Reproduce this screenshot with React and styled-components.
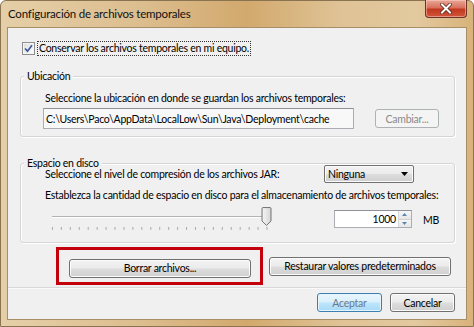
import React from 'react';
import styled, { createGlobalStyle, css } from 'styled-components';

const GlobalStyle = createGlobalStyle`
  html, body {
    margin: 0;
    padding: 0;
    width: 474px;
    height: 327px;
    overflow: hidden;
    background: #ffffff;
  }
  body {
    font-family: Lato, "Liberation Sans", sans-serif;
    font-size: 10.5px;
    letter-spacing: -0.25px;
    color: #000;
  }
  * { box-sizing: border-box; }
`;

const Window = styled.div`
  width: 474px;
  height: 327px;
  display: flex;
  flex-direction: column;
  border: 1px solid #8a7350;
  border-radius: 6px 6px 0 0;
  background: linear-gradient(90deg, #e5cfa8 0%, #dcbd8e 30%, #d2a96d 52%, #dfc396 72%, #e3c99f 88%, #d8b27a 100%);
`;

const TitleBar = styled.div`
  height: 26px;
  display: flex;
  align-items: center;
  padding-left: 7px;
`;

const Title = styled.span`
  font-size: 11.5px;
  letter-spacing: -0.2px;
  color: #111;
  margin-top: -1px;
`;

const CloseButton = styled.div`
  margin-left: auto;
  margin-right: 6px;
  align-self: flex-start;
  margin-top: -1px;
  width: 42px;
  height: 18px;
  border: 1px solid #6b3426;
  border-top: none;
  border-radius: 0 0 4px 4px;
  background: linear-gradient(180deg, #e9a898 0%, #d9705d 45%, #c2381f 55%, #d0563c 100%);
  box-shadow: inset 0 0 0 1px rgba(255, 210, 200, 0.5);
  display: flex;
  align-items: center;
  justify-content: center;
`;

const Client = styled.div`
  flex: 1;
  margin: 0 6px 6px;
  background: #f0f0f0;
  border: 1px solid #a88e66;
  display: flex;
  flex-direction: column;
`;

const CheckRow = styled.label`
  display: flex;
  align-items: center;
  gap: 2px;
  margin: 13px 0 0 14px;
  height: 15px;
`;

const CheckBox = styled.span`
  width: 13px;
  height: 13px;
  border: 1px solid #8e8f8f;
  background: linear-gradient(135deg, #dcdcdc 0%, #ffffff 100%);
  box-shadow: inset 0 0 0 1px #f4f4f4;
  display: flex;
  align-items: center;
  justify-content: center;
`;

const FocusText = styled.span`
  border: 1px dotted #333;
  padding: 0 1px;
  line-height: 13px;
`;

const Group = styled.div`
  position: relative;
  margin: ${(p) => p.$top}px 11px 0 12px;
  padding: ${(p) => p.$pad};
  border: 1px solid #d5d5d5;
  border-radius: 3px;
  box-shadow: inset 1px 1px 0 #ffffff, 1px 1px 0 #ffffff;
  display: flex;
  flex-direction: column;
`;

const Legend = styled.span`
  position: absolute;
  top: -7px;
  left: 3px;
  padding: 0 3px;
  background: #f0f0f0;
  line-height: 12px;
`;

const Text = styled.div`
  line-height: 12px;
  height: 12px;
  margin-left: ${(p) => p.$indent || 0}px;
  margin-top: ${(p) => p.$mt || 0}px;
  white-space: nowrap;
`;

const Row = styled.div`
  display: flex;
  align-items: ${(p) => p.$align || 'center'};
  height: ${(p) => p.$h}px;
  margin-top: ${(p) => p.$mt || 0}px;
`;

const TextField = styled.div`
  width: ${(p) => p.$w}px;
  height: ${(p) => p.$h}px;
  border: 1px solid #abadb3;
  border-top-color: #8e9196;
  background: ${(p) => p.$bg || '#fff'};
  display: flex;
  align-items: center;
  padding: 0 2px;
  white-space: nowrap;
  overflow: hidden;
`;

const buttonBase = css`
  height: 19px;
  border-radius: 3px;
  display: flex;
  align-items: center;
  justify-content: center;
  white-space: nowrap;
`;

const Button = styled.div`
  ${buttonBase};
  width: ${(p) => p.$w}px;
  margin-left: ${(p) => p.$ml || 0}px;
  border: 1px solid #707070;
  background: linear-gradient(180deg, #f3f3f3 0%, #ebebeb 48%, #dddddd 52%, #cfcfcf 100%);
  box-shadow: inset 0 0 0 1px #fcfcfc;
  color: #000;
  ${(p) =>
    p.$variant === 'disabled' &&
    css`
      border-color: #adb2b5;
      background: #f4f4f4;
      box-shadow: none;
      color: #8a8a8a;
    `}
  ${(p) =>
    p.$variant === 'primary' &&
    css`
      border-color: #3c7fb1;
      background: linear-gradient(180deg, #eaf6fd 0%, #d9f0fc 48%, #bee6fd 52%, #a7d9f5 100%);
      box-shadow: inset 0 0 0 1px #e8f4fb;
      color: #6a7987;
    `}
`;

const Combo = styled.div`
  width: 90px;
  height: 18px;
  margin-left: auto;
  margin-right: 25px;
  border: 1px solid #707070;
  border-radius: 2px;
  background: linear-gradient(180deg, #f2f2f2 0%, #ebebeb 48%, #dddddd 52%, #cfcfcf 100%);
  box-shadow: inset 0 0 0 1px #fbfbfb;
  display: flex;
  align-items: center;
  padding: 0 5px 0 3px;
  justify-content: space-between;
`;

const Spin = styled.div`
  display: flex;
  width: 78px;
  height: 18px;
  margin-left: 61px;
  margin-top: 5px;
  border: 1px solid #abadb3;
  border-top-color: #8e9196;
  background: #fff;
`;

const SpinValue = styled.div`
  flex: 1;
  display: flex;
  align-items: center;
  justify-content: flex-end;
  padding-right: 2px;
`;

const SpinArrows = styled.div`
  width: 13px;
  display: flex;
  flex-direction: column;
  border-left: 1px solid #d7d7d7;
`;

const SpinHalf = styled.div`
  flex: 1;
  display: flex;
  align-items: center;
  justify-content: center;
  background: linear-gradient(180deg, #f6f6f6, #e6e6e6);
  & + & { border-top: 1px solid #d0d0d0; }
`;

const Unit = styled.span`
  margin-left: 11px;
  margin-top: 9px;
`;

const ButtonRow = styled.div`
  display: flex;
  align-items: center;
  justify-content: flex-end;
  margin-top: 4px;
  padding-right: 15px;
  height: 38px;
`;

const Highlight = styled.div`
  width: 207px;
  height: 38px;
  border: 3px solid #c4000c;
  padding: 4px 9px 0 10px;
  display: flex;
  align-items: center;
`;

const Separator = styled.div`
  margin-top: 2px;
  height: 1px;
  background: #d8d8d8;
  box-shadow: 0 1px 0 #fafafa;
`;

const Footer = styled.div`
  flex: 1;
  display: flex;
  justify-content: flex-end;
  align-items: flex-start;
  padding: 5px 11px 0 0;
  gap: 8px;
`;

const Check = () => (
  <svg width="9" height="9" viewBox="0 0 9 9">
    <path d="M1 4.5 L3.5 7.2 L8 1.2" fill="none" stroke="#3b5a9a" strokeWidth="1.7" />
  </svg>
);

const CloseX = () => (
  <svg width="12" height="11" viewBox="0 0 12 11">
    <path d="M2 1.5 L10 9.5 M10 1.5 L2 9.5" stroke="#5a2418" strokeWidth="3.6" strokeLinecap="square" />
    <path d="M2 1.5 L10 9.5 M10 1.5 L2 9.5" stroke="#ffffff" strokeWidth="2" strokeLinecap="square" />
  </svg>
);

const ticks = Array.from({ length: 25 }, (_, i) => 7 + i * 9);

const Slider = () => (
  <svg width="230" height="26" viewBox="0 0 230 26">
    <line x1="7" y1="11.5" x2="224" y2="11.5" stroke="#b2b2b2" strokeWidth="1" />
    <line x1="7" y1="12.5" x2="224" y2="12.5" stroke="#ffffff" strokeWidth="1" />
    {ticks.map((x) => (
      <line key={x} x1={x + 0.5} y1="22" x2={x + 0.5} y2="25" stroke="#a8a8a8" strokeWidth="1" />
    ))}
    <defs>
      <linearGradient id="thumb" x1="0" y1="0" x2="1" y2="0">
        <stop offset="0" stopColor="#f6f6f6" />
        <stop offset="1" stopColor="#d6d6d6" />
      </linearGradient>
    </defs>
    <path d="M218.5 3.5 Q218.5 2.5 219.5 2.5 H226.5 Q227.5 2.5 227.5 3.5 V16 L223 20.5 L218.5 16 Z" fill="url(#thumb)" stroke="#707070" strokeWidth="1" />
  </svg>
);

const Arrow = ({ up, color = '#000', w = 7, h = 4 }) => (
  <svg width={w} height={h} viewBox="0 0 7 4">
    <path d={up ? 'M0 4 L3.5 0 L7 4 Z' : 'M0 0 L7 0 L3.5 4 Z'} fill={color} />
  </svg>
);

export default function App() {
  return (
    <>
      <GlobalStyle />
      <Window>
        <TitleBar>
          <Title>Configuración de archivos temporales</Title>
          <CloseButton>
            <CloseX />
          </CloseButton>
        </TitleBar>
        <Client>
          <CheckRow>
            <CheckBox>
              <Check />
            </CheckBox>
            <FocusText>Conservar los archivos temporales en mi equipo.</FocusText>
          </CheckRow>

          <Group $top={20} $pad="15px 15px 7px 22px">
            <Legend>Ubicación</Legend>
            <Text $indent={2}>Seleccione la ubicación en donde se guardan los archivos temporales:</Text>
            <Row $h={21} $mt={4}>
              <TextField $w={311} $h={21} $bg="#f8f8f8">
                C:\Users\Paco\AppData\LocalLow\Sun\Java\Deployment\cache
              </TextField>
              <Button $w={64} $ml={21} $variant="disabled">
                Cambiar...
              </Button>
            </Row>
          </Group>

          <Group $top={26} $pad="1px 15px 11px 24px">
            <Legend>Espacio en disco</Legend>
            <Row $h={18}>
              <Text>Seleccione el nivel de compresión de los archivos JAR:</Text>
              <Combo>
                <span>Ninguna</span>
                <Arrow />
              </Combo>
            </Row>
            <Text $mt={6}>
              Establezca la cantidad de espacio en disco para el almacenamiento de archivos temporales:
            </Text>
            <Row $h={26} $mt={4} $align="flex-start">
              <Slider />
              <Spin>
                <SpinValue>1000</SpinValue>
                <SpinArrows>
                  <SpinHalf>
                    <Arrow up color="#5b86b0" w={5} h={3} />
                  </SpinHalf>
                  <SpinHalf>
                    <Arrow color="#5b86b0" w={5} h={3} />
                  </SpinHalf>
                </SpinArrows>
              </Spin>
              <Unit>MB</Unit>
            </Row>
          </Group>

          <ButtonRow>
            <Highlight>
              <Button $w={182}>Borrar archivos...</Button>
            </Highlight>
            <Button $w={182} $ml={6}>
              Restaurar valores predeterminados
            </Button>
          </ButtonRow>
          <Separator />
          <Footer>
            <Button $w={65} $variant="primary">
              Aceptar
            </Button>
            <Button $w={65}>Cancelar</Button>
          </Footer>
        </Client>
      </Window>
    </>
  );
}
